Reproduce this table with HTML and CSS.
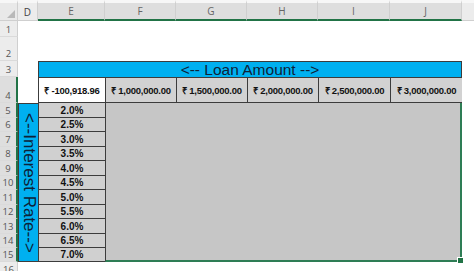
FILE: index.html
```html
<!DOCTYPE html>
<html lang="en">
<head>
<meta charset="utf-8">
<title>Loan sheet</title>
<link rel="stylesheet" href="styles.css">
</head>
<body>
<div class="sheet">
  <div class="corner"><span class="tri"></span></div>
  <div class="colhdr">D</div>
  <div class="colhdr sel">E</div>
  <div class="colhdr sel">F</div>
  <div class="colhdr sel">G</div>
  <div class="colhdr sel">H</div>
  <div class="colhdr sel">I</div>
  <div class="colhdr sel">J</div>
  <div class="colhdr last"></div>

  <div class="rowhdr">1</div><div class="blank wide"></div>
  <div class="rowhdr">2</div><div class="blank wide"></div>
  <div class="rowhdr">3</div><div class="blank"></div>
  <div class="banner">&lt;-- Loan Amount --&gt;</div><div class="blank"></div>

  <div class="rowhdr sel">4</div><div class="blank"></div>
  <div class="amt pmt">₹ -100,918.96</div>
  <div class="amt">₹ 1,000,000.00</div>
  <div class="amt">₹ 1,500,000.00</div>
  <div class="amt">₹ 2,000,000.00</div>
  <div class="amt">₹ 2,500,000.00</div>
  <div class="amt">₹ 3,000,000.00</div>
  <div class="blank"></div>

  <div class="rowhdr sel">5</div>
  <div class="vbanner"><span class="vtext">&lt;--Interest Rate--&gt;</span></div>
  <div class="pct">2.0%</div>
  <div class="table-area"><span class="handle"></span></div>
  <div class="blank tall"></div>
  <div class="rowhdr sel">6</div><div class="pct">2.5%</div>
  <div class="rowhdr sel">7</div><div class="pct">3.0%</div>
  <div class="rowhdr sel">8</div><div class="pct">3.5%</div>
  <div class="rowhdr sel">9</div><div class="pct">4.0%</div>
  <div class="rowhdr sel">10</div><div class="pct">4.5%</div>
  <div class="rowhdr sel">11</div><div class="pct">5.0%</div>
  <div class="rowhdr sel">12</div><div class="pct">5.5%</div>
  <div class="rowhdr sel">13</div><div class="pct">6.0%</div>
  <div class="rowhdr sel">14</div><div class="pct">6.5%</div>
  <div class="rowhdr sel">15</div><div class="pct">7.0%</div>
  <div class="rowhdr last-row">16</div><div class="blank wide"></div>
</div>
</body>
</html>
```

FILE: styles.css
```css
html, body {
  margin: 0;
  padding: 0;
  background: #ffffff;
}

.sheet {
  display: grid;
  width: 474px;
  height: 271px;
  overflow: hidden;
  grid-template-columns: 18px 20px 67px 71px 71px 71px 72px 72px 1fr;
  grid-template-rows: 21px 16px 24px 16px 26px 15px 14px 15px 14px 15px 14px 15px 14px 15px 14px 14px 1fr;
  font-family: "Liberation Sans", Arial, sans-serif;
  color: #000;
}

.corner {
  position: relative;
  background: #e9e9e9;
  border-top: 3px solid #f7f7f7;
  border-right: 1px solid #cfcfcf;
  border-bottom: 1px solid #cfcfcf;
  box-sizing: border-box;
}

.tri {
  position: absolute;
  right: 2px;
  bottom: 2px;
  width: 0;
  height: 0;
  border-left: 8px solid transparent;
  border-bottom: 8px solid #b9b9b9;
}

.colhdr {
  display: flex;
  align-items: center;
  justify-content: center;
  background: #ececec;
  border-top: 3px solid #f7f7f7;
  border-right: 1px solid #cfcfcf;
  border-bottom: 1px solid #cfcfcf;
  box-sizing: border-box;
  font-family: "Open Sans", sans-serif;
  font-size: 10px;
  color: #444;
}

.colhdr.sel {
  background: #dedede;
  border-bottom: 2px solid #217346;
  color: #666;
}

.colhdr.last {
  border-right: none;
}

.rowhdr {
  display: flex;
  align-items: flex-end;
  justify-content: center;
  padding-bottom: 1px;
  background: #ececec;
  border-right: 1px solid #cfcfcf;
  border-bottom: 1px solid #dadada;
  box-sizing: border-box;
  font-family: "Open Sans", sans-serif;
  font-size: 9.5px;
  line-height: 11px;
  color: #555;
}

.rowhdr.sel {
  background: #dedede;
  border-right: 2px solid #217346;
}

.rowhdr.last-row {
  align-items: flex-start;
  padding-top: 2px;
  padding-bottom: 0;
}

.blank {
  background: #ffffff;
}

.blank.wide {
  grid-column: span 8;
}

.blank.tall {
  grid-row: span 11;
}

.banner {
  grid-column: span 6;
  display: flex;
  align-items: center;
  justify-content: center;
  background: #00b0f0;
  border: 1px solid #3c3c3c;
  border-bottom: none;
  box-sizing: border-box;
  font-size: 15.5px;
  line-height: 16px;
  color: #0e2238;
}

.amt {
  display: flex;
  align-items: center;
  justify-content: center;
  background: #d2d2d2;
  border-left: 1px solid #3c3c3c;
  border-top: 1px solid #3c3c3c;
  border-bottom: 1px solid #3c3c3c;
  box-sizing: border-box;
  font-size: 9.5px;
  font-weight: bold;
  letter-spacing: -0.25px;
  white-space: nowrap;
  color: #111;
}

.amt:nth-last-of-type(2) {
  border-right: 1px solid #3c3c3c;
}

.amt.pmt {
  background: #ffffff;
}

.vbanner {
  grid-row: span 11;
  display: flex;
  align-items: center;
  justify-content: center;
  background: #00b0f0;
  border: 1px solid #3c3c3c;
  border-right: none;
  box-sizing: border-box;
}

.vtext {
  writing-mode: vertical-rl;
  font-size: 17px;
  line-height: 18px;
  color: #0e2238;
  white-space: nowrap;
}

.pct {
  display: flex;
  align-items: center;
  justify-content: center;
  background: #d0d0d0;
  border-left: 1px solid #3c3c3c;
  border-bottom: 1px solid #3c3c3c;
  box-sizing: border-box;
  font-size: 10px;
  font-weight: bold;
  color: #111;
}

.table-area {
  grid-column: span 5;
  grid-row: span 11;
  position: relative;
  background: #c6c6c6;
  border-left: 1px solid #3c3c3c;
  border-right: 2px solid #2e7d55;
  border-bottom: 2px solid #2e7d55;
  box-sizing: border-box;
}

.handle {
  position: absolute;
  right: -4px;
  bottom: -4px;
  width: 5px;
  height: 5px;
  background: #217346;
  border: 1px solid #ffffff;
}
```
